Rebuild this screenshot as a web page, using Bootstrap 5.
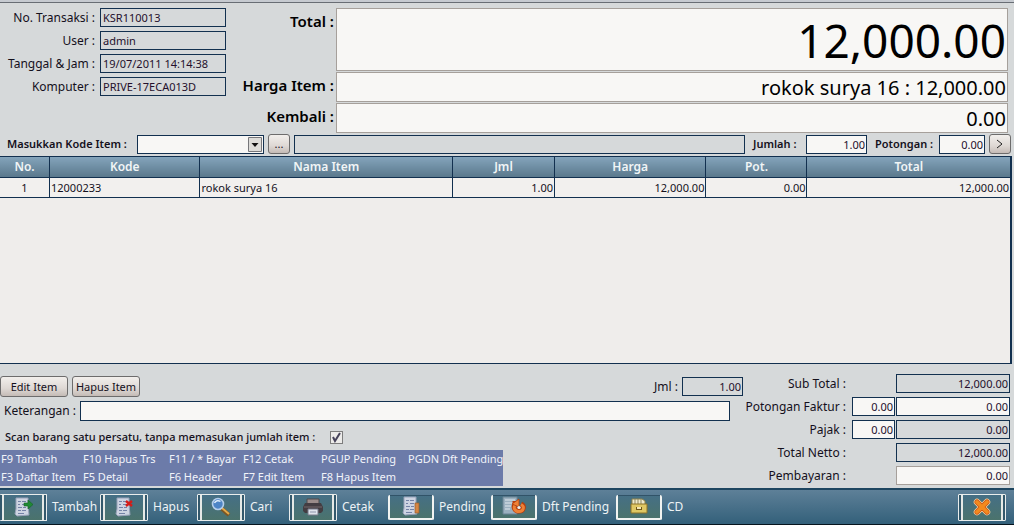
<!DOCTYPE html>
<html lang="id">
<head>
<meta charset="utf-8">
<meta name="viewport" content="width=device-width, initial-scale=1">
<title>Kasir</title>
<link href="https://cdn.jsdelivr.net/npm/bootstrap@5.3.0/dist/css/bootstrap.min.css" rel="stylesheet">
<style>
  :root { --navy: #12304f; --panel: #d6d9da; }
  body { font-family: "Noto Sans", "Open Sans", sans-serif; font-size: 11px; line-height: 16px; color: #14101c; background: var(--panel); }
  .top-edge { height: 3px; background: #c6cad0; border-bottom: 1px solid #686d74; }
  .field { height: 19px; min-width: 0; padding: 0 2px; border: 1px solid var(--navy); border-radius: 0; background: #f8f7f5; color: #24102c; font-size: 11px; line-height: 16px; }
  .field[readonly] { background: var(--panel); }
  .field.soft { border-color: #a6a09b; background: #f8f7f5; }
  .num { text-align: right; padding-right: 1px; }
  .w-qty { width: 61px; }
  .w-cut { width: 46px; }

  .head { padding: 5px 6px 0 0; }
  .info-grid { display: grid; grid-template-columns: 100px 126px; row-gap: 4px; }
  .info-grid label, .sum-grid label { text-align: right; padding-right: 5px; font-size: 12px; line-height: 19px; }
  .display-grid { display: grid; grid-template-columns: 110px minmax(0, 1fr); row-gap: 1px; }
  .display-grid label { font-size: 15px; line-height: 26px; font-weight: 600; text-align: right; padding-right: 2px; color: #000; }
  .display-grid .field { width: 100%; height: 30px; color: #000; font-size: 20px; line-height: 28px; }
  .display-grid .field.grand { height: 63px; font-size: 46px; line-height: 60px; }

  .entry { padding: 1px 3px 2px 0; }
  .entry label { font-weight: 600; }
  .entry-code { width: 133px; padding-left: 7px; }
  .entry-label { width: 53px; }
  .entry-label-lg { width: 64px; }
  .combo { width: 127px; position: relative; }
  .combo select { width: 100%; appearance: none; }
  .combo svg { position: absolute; right: 2px; top: 2px; pointer-events: none; }
  .btn-old { --bs-btn-color: #14101c; height: 21px; padding: 0; font-size: 11px; line-height: 16px; border: 1px solid #6d6c6c; border-radius: 3px; background: linear-gradient(#f2efec, #ded8d4 60%, #c4bbb6); }
  .btn-mini { width: 22px; height: 20px; }
  .btn-wide { width: 68px; }

  .item-area { background: #efedeb; border: 1px solid var(--navy); border-width: 1px 2px 1px 0; margin-right: 2px; }
  .items { table-layout: fixed; width: 100%; border-collapse: collapse; }
  .items th, .items td { height: 20px; padding: 0 1px; border: 1px solid var(--navy); border-top: 0; line-height: 19px; }
  .items th { background: linear-gradient(#84a4bb, #5a788c); color: #f1f5f6; font-size: 12px; font-weight: 600; text-align: center; }
  .items td { background: #f2f0ee; }
  .items tr > :first-child { border-left: 0; }
  .items tr > :last-child { border-right: 0; }

  .bottom-left { padding: 12px 0 2px; }
  .bottom-left .plain-label { font-size: 12px; }
  .note-label { width: 80px; padding-left: 4px; }
  .note { height: 20px; margin-right: 13px; }
  .scan-row { padding: 8px 0 5px 5px; }
  .scan-row label { width: 325px; font-weight: 500; }
  .check { width: 13px; height: 13px; margin: 0; border: 1px solid #7d7d7d; border-radius: 0; background-color: #ecebe9; }
  .form-check-input.check:checked { border-radius: 0; background-color: #ecebe9; border-color: #7d7d7d; background-size: 11px; background-image: url("data:image/svg+xml,%3csvg xmlns='http://www.w3.org/2000/svg' viewBox='0 0 11 11'%3e%3cpath d='M2 5 4 9 9 1' fill='none' stroke='%23454159' stroke-width='2'/%3e%3c/svg%3e"); }
  .keys { display: grid; grid-template-columns: 82px 86px 74px 78px 87px auto; padding-left: 1px; background: #6c7ba9; color: #f2f4fa; line-height: 18px; width: max-content; }
  .sum-grid { display: grid; grid-template-columns: 108px 43px 114px; gap: 4px 1px; padding-top: 10px; }
  .wide { grid-column: 2 / 4; justify-self: end; width: 114px; }

  .tools { height: 37px; padding-right: 8px; background: linear-gradient(#5e8098, #33607a); border-top: 2px solid #1e4660; border-bottom: 1px solid #06141e; color: #eef3f5; }
  .tool-grid { display: grid; grid-template-columns: 100px 97px 92px 99px 103px 125px auto; }
  .tool-grid label { font-size: 12px; line-height: 16px; padding-left: 5px; }
  .btn-tool { width: 48px; height: 27px; padding: 0; border: 1px solid #e9edec; border-radius: 1px; background: linear-gradient(#456f86, #4b736c); box-shadow: inset 2px 0 0 #33586c, inset -2px 0 0 #33586c, inset 4px 0 0 #e6e9e6, inset -4px 0 0 #e6e9e6; display: flex; align-items: center; justify-content: center; }
  .btn-tool.flat { width: 46px; height: 25px; border-width: 0 2px 2px; border-color: #f1f3f1; border-radius: 2px; box-shadow: inset 0 1px 0 #315368; }
  .btn-tool.edge { width: 47px; border-left: 0; }
</style>
</head>
<body class="d-flex flex-column min-vh-100">
<div class="top-edge"></div>

<header class="head d-flex align-items-start">
  <div class="info-grid">
    <label for="trx">No. Transaksi :</label><input id="trx" class="field" readonly value="KSR110013">
    <label for="usr">User :</label><input id="usr" class="field" readonly value="admin">
    <label for="tgl">Tanggal &amp; Jam :</label><input id="tgl" class="field" readonly value="19/07/2011 14:14:38">
    <label for="kom">Komputer :</label><input id="kom" class="field" readonly value="PRIVE-17ECA013D">
  </div>
  <div class="display-grid flex-grow-1">
    <label for="grand">Total :</label><input id="grand" class="field soft num grand" readonly value="12,000.00">
    <label for="harga">Harga Item :</label><input id="harga" class="field soft num" readonly value="rokok surya 16 : 12,000.00">
    <label for="kembali">Kembali :</label><input id="kembali" class="field soft num" readonly value="0.00">
  </div>
</header>

<form class="entry d-flex align-items-center">
  <label for="kode" class="entry-code me-1 flex-shrink-0">Masukkan Kode Item :</label>
  <div class="combo flex-shrink-0 me-1">
    <select id="kode" class="field d-block"><option></option></select>
    <svg width="14" height="15" viewBox="0 0 14 15"><path d="M.5.5h13v14H.5z" fill="#dddcd9" stroke="#77777a"/><path d="M3.500 6h7l-3.500 4z" fill="#111"/></svg>
  </div>
  <button type="button" class="btn btn-old btn-mini flex-shrink-0 me-1">...</button>
  <input class="field flex-grow-1 me-2" readonly aria-label="Nama item">
  <label for="jumlah" class="entry-label">Jumlah :</label>
  <input id="jumlah" class="field num w-qty me-2" value="1.00">
  <label for="potongan" class="entry-label-lg">Potongan :</label>
  <input id="potongan" class="field num w-cut" value="0.00">
  <button type="button" class="btn btn-old btn-mini d-flex align-items-center justify-content-center ms-1" aria-label="Lanjut"><svg width="8" height="10" viewBox="0 0 8 10"><path d="m1 1 5 4-5 4" fill="none" stroke="#222"/></svg></button>
</form>

<main class="item-area flex-grow-1">
  <table class="items">
    <colgroup><col style="width:4.900%"><col style="width:14.900%"><col style="width:25%"><col style="width:10.100%"><col style="width:15%"><col style="width:10%"><col style="width:20.100%"></colgroup>
    <thead><tr><th>No.</th><th>Kode</th><th>Nama Item</th><th>Jml</th><th>Harga</th><th>Pot.</th><th>Total</th></tr></thead>
    <tbody><tr><td class="text-center">1</td><td>12000233</td><td>rokok surya 16</td><td class="text-end">1.00</td><td class="text-end">12,000.00</td><td class="text-end">0.00</td><td class="text-end">12,000.00</td></tr></tbody>
  </table>
</main>

<section class="d-flex align-items-start pe-1">
  <div class="bottom-left flex-grow-1">
    <div class="d-flex align-items-center">
      <button type="button" class="btn btn-old btn-wide me-1">Edit Item</button>
      <button type="button" class="btn btn-old btn-wide">Hapus Item</button>
      <label for="jml" class="plain-label ms-auto me-1">Jml :</label>
      <input id="jml" class="field num w-qty" readonly value="1.00">
    </div>
    <div class="d-flex align-items-center mt-1">
      <label for="ket" class="plain-label note-label">Keterangan :</label><input id="ket" class="field note flex-grow-1">
    </div>
    <div class="scan-row d-flex align-items-center">
      <label for="scan">Scan barang satu persatu, tanpa memasukan jumlah item :</label>
      <input type="checkbox" id="scan" class="form-check-input check" checked>
    </div>
    <div class="keys">
      <span>F9 Tambah</span><span>F10 Hapus Trs</span><span>F11 / * Bayar</span><span>F12 Cetak</span><span>PGUP Pending</span><span>PGDN Dft Pending</span>
      <span>F3 Daftar Item</span><span>F5 Detail</span><span>F6 Header</span><span>F7 Edit Item</span><span>F8 Hapus Item</span>
    </div>
  </div>
  <div class="sum-grid">
    <label for="sub">Sub Total :</label><input id="sub" class="field num wide" readonly value="12,000.00">
    <label for="pf">Potongan Faktur :</label><input id="pf" class="field num" value="0.00"><input class="field num" aria-label="Nilai potongan" value="0.00">
    <label for="pjk">Pajak :</label><input id="pjk" class="field num" value="0.00"><input class="field num" readonly aria-label="Nilai pajak" value="0.00">
    <label for="net">Total Netto :</label><input id="net" class="field num wide" readonly value="12,000.00">
    <label for="byr">Pembayaran :</label><input id="byr" class="field soft num wide" value="0.00">
  </div>
</section>

<svg width="0" height="0" class="d-none">
  <symbol id="i-page" viewBox="0 0 20 20">
    <path d="M3 1h12v6l1 11-12 1-2-2 1-5z" fill="#ced4e2" stroke="#97a1b8"/>
    <path d="M5 4.500h3m1 0h4M5 7.500h2m2 0h4M5 10.500h4m1 0h3M5 13.500h3m1 0h4M5 16.500h6" stroke="#7482a6"/>
  </symbol>
</svg>
<footer class="tools d-flex align-items-center justify-content-between">
  <div class="tool-grid">
    <div class="d-flex align-items-center">
      <button type="button" id="b-add" class="btn btn-tool edge"><svg width="20" height="20"><use href="#i-page"/><path d="M11 6h4V3l5 4.500-5 4.500V9h-4z" fill="#1f8a34" stroke="#176127" stroke-width=".6"/></svg></button>
      <label for="b-add">Tambah</label>
    </div>
    <div class="d-flex align-items-center">
      <button type="button" id="b-del" class="btn btn-tool"><svg width="20" height="20"><use href="#i-page"/><path d="m12 4 6 5m0-5-6 5" stroke="#d41c18" stroke-width="2.400"/></svg></button>
      <label for="b-del">Hapus</label>
    </div>
    <div class="d-flex align-items-center">
      <button type="button" id="b-find" class="btn btn-tool"><svg width="22" height="20"><path d="m11 11 8 7" stroke="#7b5522" stroke-width="4"/><path d="m12 11 7 6" stroke="#e3a94a" stroke-width="2"/><circle cx="8" cy="7" r="5.500" fill="#4d84c6" stroke="#b4cdea" stroke-width="1.600"/><path d="M4.500 6a4 4 0 0 1 6-1.500" fill="none" stroke="#dcebfa" stroke-width="1.500"/></svg></button>
      <label for="b-find">Cari</label>
    </div>
    <div class="d-flex align-items-center">
      <button type="button" id="b-print" class="btn btn-tool"><svg width="22" height="20"><path d="M5 2h12v6H5z" fill="#9a8c8a" stroke="#51484a"/><path d="M3 6h16l2 4v4l-2 2H3l-2-2v-4z" fill="#433d42"/><path d="M2 10h18" stroke="#75696a"/><path d="M6 12h10v6H6z" fill="#dfe3ec" stroke="#777b89"/><path d="M8 15h6" stroke="#8d95aa"/></svg></button>
      <label for="b-print">Cetak</label>
    </div>
    <div class="d-flex align-items-center">
      <button type="button" id="b-pend" class="btn btn-tool flat"><svg width="20" height="20"><use href="#i-page"/><path d="M14 7h4v10h-4z" fill="#d58543" stroke="#97602f" stroke-width=".7"/></svg></button>
      <label for="b-pend">Pending</label>
    </div>
    <div class="d-flex align-items-center">
      <button type="button" id="b-list" class="btn btn-tool flat"><svg width="24" height="20"><path d="M1 1h14v17H1z" fill="#9bb0bf" stroke="#6a8394"/><path d="M3 4h10M3 7h8m-8 3h6m-6 3h5" stroke="#e0e8ee"/><path d="M13 5v3.500c-2 3 0 6.500 4 6.500 4.500 0 6-5 2-7" fill="none" stroke="#b53c0c" stroke-width="5"/><path d="M13 9c-2 3 0 6.500 4 6.500 4.500 0 6-5 2-7" fill="none" stroke="#ee8136" stroke-width="3"/><path d="M10 8l7-5v8z" fill="#ee8136" stroke="#b53c0c" stroke-width=".8"/><circle cx="17" cy="11.500" r="1.600" fill="#f5efe8"/></svg></button>
      <label for="b-list">Dft Pending</label>
    </div>
    <div class="d-flex align-items-center">
      <button type="button" id="b-cd" class="btn btn-tool flat"><svg width="18" height="18"><path d="M2 2h10l3 2v6H2z" fill="#eee9cc" stroke="#8f8248"/><path d="M5 2v5m3-5v5m3-5v5" stroke="#91895f"/><path d="M1 7h16v9H1z" fill="#dfc763" stroke="#8c7329"/><path d="M6 10h6v3H6z" fill="#6d5718"/><path d="M7 10h4v2H7z" fill="#f4e7b5"/></svg></button>
      <label for="b-cd">CD</label>
    </div>
  </div>
  <button type="button" class="btn btn-tool" aria-label="Tutup"><svg width="20" height="18" viewBox="0 0 20 18"><path d="m5 4 10 10M15 4 5 14" stroke="#f6d7a0" stroke-width="6.500" stroke-linecap="round"/><path d="m5 4 10 10M15 4 5 14" stroke="#c9480f" stroke-width="5" stroke-linecap="round"/><path d="m5 4 10 10M15 4 5 14" stroke="#f28a1e" stroke-width="3.800" stroke-linecap="round"/></svg></button>
</footer>
<script src="https://cdn.jsdelivr.net/npm/bootstrap@5.3.0/dist/js/bootstrap.bundle.min.js"></script>
</body>
</html>
